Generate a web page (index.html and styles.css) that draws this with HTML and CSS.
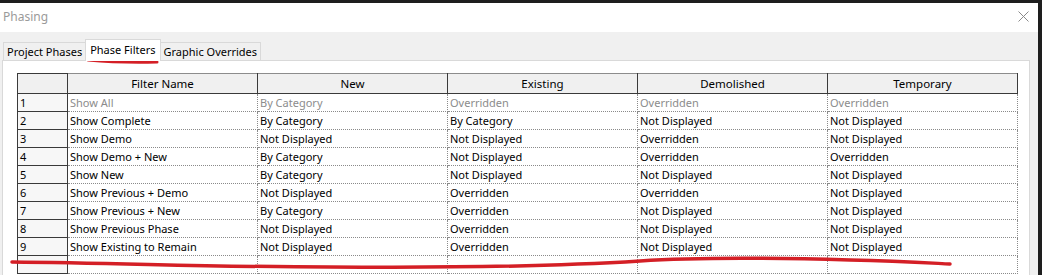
FILE: index.html
```html
<!DOCTYPE html>
<html lang="en">

<head>
    <meta charset="UTF-8">
    <title>Phasing</title>
    <link rel="stylesheet" href="styles.css">
</head>

<body>

    <div class="window">
        <div class="titlebar">
            <span class="title">Phasing</span>
            <svg class="close" width="11" height="11" viewBox="0 0 11 11">
                <path d="M0.5 0.5 L10.5 10.5 M10.5 0.5 L0.5 10.5" stroke="#8a8a8a" stroke-width="1" fill="none" />
            </svg>
        </div>
        <div class="content">
            <ul class="tabs">
                <li class="tab">Project Phases</li>
                <li class="tab active">Phase Filters</li>
                <li class="tab">Graphic Overrides</li>
            </ul>
            <div class="panel">
                <table class="grid">
                    <colgroup>
                        <col class="c-num">
                        <col class="c-col">
                        <col class="c-col">
                        <col class="c-col">
                        <col class="c-col">
                        <col class="c-col">
                    </colgroup>
                    <thead>
                        <tr>
                            <th class="num"></th>
                            <th>Filter Name</th>
                            <th>New</th>
                            <th>Existing</th>
                            <th>Demolished</th>
                            <th>Temporary</th>
                        </tr>
                    </thead>
                    <tbody>
                        <tr class="locked">
                            <td class="num">1</td>
                            <td>Show All</td>
                            <td>By Category</td>
                            <td>Overridden</td>
                            <td>Overridden</td>
                            <td>Overridden</td>
                        </tr>
                        <tr>
                            <td class="num">2</td>
                            <td>Show Complete</td>
                            <td>By Category</td>
                            <td>By Category</td>
                            <td>Not Displayed</td>
                            <td>Not Displayed</td>
                        </tr>
                        <tr>
                            <td class="num">3</td>
                            <td>Show Demo</td>
                            <td>Not Displayed</td>
                            <td>Not Displayed</td>
                            <td>Overridden</td>
                            <td>Not Displayed</td>
                        </tr>
                        <tr>
                            <td class="num">4</td>
                            <td>Show Demo + New</td>
                            <td>By Category</td>
                            <td>Not Displayed</td>
                            <td>Overridden</td>
                            <td>Overridden</td>
                        </tr>
                        <tr>
                            <td class="num">5</td>
                            <td>Show New</td>
                            <td>By Category</td>
                            <td>Not Displayed</td>
                            <td>Not Displayed</td>
                            <td>Not Displayed</td>
                        </tr>
                        <tr>
                            <td class="num">6</td>
                            <td>Show Previous + Demo</td>
                            <td>Not Displayed</td>
                            <td>Overridden</td>
                            <td>Overridden</td>
                            <td>Not Displayed</td>
                        </tr>
                        <tr>
                            <td class="num">7</td>
                            <td>Show Previous + New</td>
                            <td>By Category</td>
                            <td>Overridden</td>
                            <td>Not Displayed</td>
                            <td>Not Displayed</td>
                        </tr>
                        <tr>
                            <td class="num">8</td>
                            <td>Show Previous Phase</td>
                            <td>Not Displayed</td>
                            <td>Overridden</td>
                            <td>Not Displayed</td>
                            <td>Not Displayed</td>
                        </tr>
                        <tr>
                            <td class="num">9</td>
                            <td>Show Existing to Remain</td>
                            <td>Not Displayed</td>
                            <td>Overridden</td>
                            <td>Not Displayed</td>
                            <td>Not Displayed</td>
                        </tr>
                        <tr>
                            <td class="num"></td>
                            <td></td>
                            <td></td>
                            <td></td>
                            <td></td>
                            <td></td>
                        </tr>
                    </tbody>
                </table>
            </div>
        </div>
    </div>

    <!-- red marker strokes drawn over the screenshot -->
    <svg class="marks" width="1042" height="275" viewBox="0 0 1042 275">
        <path d="M88 60 Q120 63 157 62" stroke="#d41f26" stroke-width="3" fill="none" stroke-linecap="round" />
        <path d="M12 262 C120 263 220 267 330 267 C450 268 560 266 640 261 C700 257 780 258 850 260 C900 261 930 263 950 264"
            stroke="#d41f26" stroke-width="3.5" fill="none" stroke-linecap="round" />
    </svg>

</body>

</html>
```

FILE: styles.css
```css
* {
    box-sizing: border-box;
}

body {
    margin: 0;
    width: 1042px;
    height: 275px;
    overflow: hidden;
    background: #1e1e1e;
    font-family: "Noto Sans", "Open Sans", sans-serif;
    font-size: 11px;
    color: #000;
}

.window {
    display: flex;
    flex-direction: column;
    height: 272px;
    margin-top: 3px;
    margin-right: 4px;
    background: #f0f0f0;
    overflow: hidden;
}

.titlebar {
    display: flex;
    flex: none;
    justify-content: space-between;
    align-items: center;
    height: 29px;
    padding: 0 9px 2px 3px;
    background: #fff;
}

.title {
    font-size: 12px;
    color: #9a9a9a;
}

.content {
    flex: none;
    padding: 7px 8px 0 2px;
}

.tabs {
    display: flex;
    align-items: flex-end;
    margin: 0;
    padding: 0 0 0 1px;
    list-style: none;
}

.tab {
    height: 18px;
    padding: 0 3px;
    line-height: 17px;
    border: 1px solid #d9d9d9;
    border-bottom: none;
    background: #f0f0f0;
}

.tab + .tab {
    margin-left: -1px;
}

.tab.active {
    height: 22px;
    padding: 0 4px;
    line-height: 19px;
    background: #fff;
    position: relative;
    z-index: 1;
    margin-bottom: -1px;
}

.panel {
    background: #fff;
    border: 1px solid #d9d9d9;
    border-bottom: none;
    padding: 12px 13px 0 14px;
    height: 220px;
}

.grid {
    border-collapse: collapse;
    table-layout: fixed;
    width: 999px;
}

.c-num {
    width: 50px;
}

.c-col {
    width: 190px;
}

th {
    height: 20px;
    padding: 0;
    font-size: 11.5px;
    font-weight: normal;
    text-align: center;
    background: #f0f0f0;
    border: 1px solid #3a3a3a;
    border-top-color: #8c8c8c;
}

td {
    height: 18px;
    padding: 0 2px;
    white-space: nowrap;
    overflow: hidden;
    border: 1px dotted #8a8a8a;
}

td.num,
th.num {
    background: #f0f0f0;
    border: 1px solid #3a3a3a;
}

td.num {
    background: #f7f7f7;
}

.locked td {
    color: #8c8c8c;
}

.locked td.num {
    color: #000;
}

.marks {
    position: absolute;
    top: 0;
    left: 0;
    pointer-events: none;
}
```
